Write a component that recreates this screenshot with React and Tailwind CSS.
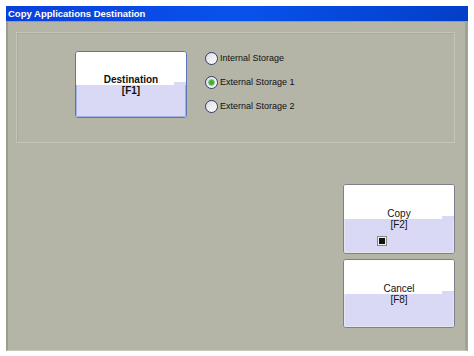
import React from "react";

const font = { fontFamily: '"Liberation Sans", "DejaVu Sans", sans-serif' };

function SoftButton({ label, fkey, bold, selected, children, h }) {
  return (
    <div
      className={`relative flex flex-col rounded-[3px] border ${selected ? "border-[#5a74b8]" : "border-[#7d8089]"} bg-white overflow-hidden`}
      style={{ height: h }}
    >
      <div className={`absolute inset-0 rounded-[2px] border ${selected ? "border-[#9fb2e0]" : "border-[#e6e6ee]"} pointer-events-none`} />
      <div className="flex-1 bg-white relative">
        <div className="absolute right-0 bottom-0 w-[12px] h-[3px] bg-[#d9d9f5]" />
      </div>
      <div className="flex-1 bg-[#d9d9f5]" />
      <div className={`absolute inset-0 flex flex-col items-center justify-center text-[10px] leading-[11px] text-[#111] ${bold ? "font-bold" : ""}`} style={font}>
        <span>{label}</span>
        <span>{fkey}</span>
      </div>
      {children}
    </div>
  );
}

function Radio({ checked, label }) {
  return (
    <div className="flex items-center gap-[2px] h-[13px]">
      <div className="w-[13px] h-[13px] rounded-full border border-[#2e3f6e] bg-gradient-to-br from-[#dcdce6] to-white flex items-center justify-center">
        {checked && <div className="w-[7px] h-[7px] rounded-full bg-[#3fae3a] border border-[#7fd07a]" />}
      </div>
      <span className="text-[9px] leading-[13px] text-[#111]" style={font}>{label}</span>
    </div>
  );
}

export default function App() {
  return (
    <div className="w-[474px] h-[356px] bg-white pt-[6px] pl-[6px]">
      <div className="w-[462px] h-[345px] flex flex-col">
        <div className="h-[16px] bg-gradient-to-r from-[#0a40dc] via-[#0852ec] to-[#033fc8] flex items-center pl-[2px] border-b border-[#7f9be0]">
          <span className="text-white font-bold text-[9.5px] leading-none" style={font}>
            Copy Applications Destination
          </span>
        </div>
        <div className="flex-1 bg-[#b4b5a7] border-l-2 border-[#9c9d92] border-r-[3px] border-r-[#a2a397] border-b border-b-[#c9cabd] flex flex-col pl-[8px] pt-[10px] pr-[10px]">
          <div className="w-[439px] h-[111px] border border-[#c4c5b8] shadow-[inset_1px_1px_0_#a9aa9d] flex items-start pl-[58px] pt-[18px]">
            <div className="w-[112px]">
              <SoftButton label="Destination" fkey="[F1]" bold selected h={67} />
            </div>
            <div className="flex flex-col gap-[11px] ml-[18px] mt-[1px]">
              <Radio label="Internal Storage" />
              <Radio checked label="External Storage 1" />
              <Radio label="External Storage 2" />
            </div>
          </div>
          <div className="flex flex-col items-end mt-[41px] gap-[5px] w-[439px]">
            <div className="w-[112px]">
              <SoftButton label="Copy" fkey="[F2]" h={70}>
                <div className="absolute left-[34px] top-[52px] w-[8px] h-[8px] bg-[#111] border border-[#f0f0f0] shadow-[0_0_0_1px_#888]" />
              </SoftButton>
            </div>
            <div className="w-[112px]">
              <SoftButton label="Cancel" fkey="[F8]" h={69} />
            </div>
          </div>
        </div>
      </div>
    </div>
  );
}
